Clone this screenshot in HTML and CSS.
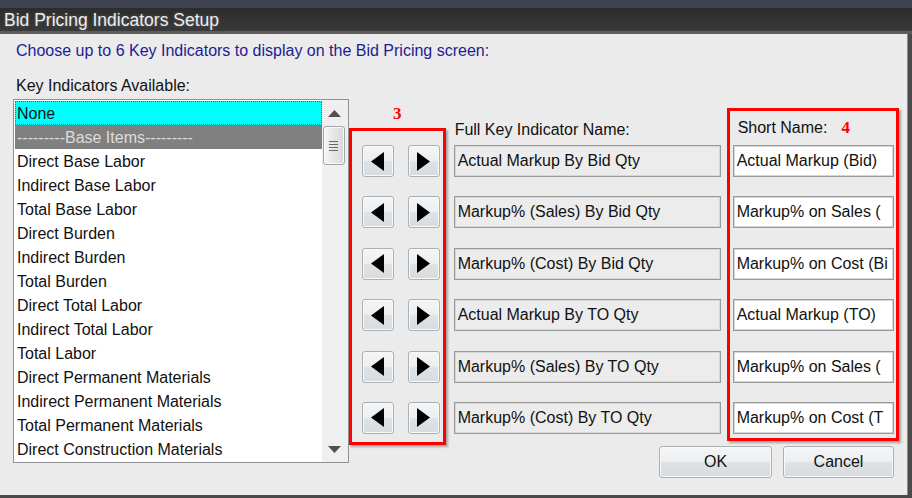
FILE: index.html
```html
<!DOCTYPE html>
<html>
<head>
<meta charset="utf-8">
<title>Bid Pricing Indicators Setup</title>
<link rel="stylesheet" href="styles.css">
</head>
<body>
<div class="window">
  <div class="titlebar"><span class="title">Bid Pricing Indicators Setup</span></div>
  <div class="content">
    <div class="heading">Choose up to 6 Key Indicators to display on the Bid Pricing screen:</div>
    <div class="label">Key Indicators Available:</div>
    <div class="main">
      <div class="listbox">
        <ul class="items">
          <li class="sel">None</li>
          <li class="group">---------Base Items---------</li>
          <li>Direct Base Labor</li>
          <li>Indirect Base Labor</li>
          <li>Total Base Labor</li>
          <li>Direct Burden</li>
          <li>Indirect Burden</li>
          <li>Total Burden</li>
          <li>Direct Total Labor</li>
          <li>Indirect Total Labor</li>
          <li>Total Labor</li>
          <li>Direct Permanent Materials</li>
          <li>Indirect Permanent Materials</li>
          <li>Total Permanent Materials</li>
          <li>Direct Construction Materials</li>
        </ul>
        <div class="scrollbar">
          <div class="sb-btn"><svg width="13" height="7" viewBox="0 0 13 7"><path d="M6.5 0 L13 7 L0 7 Z" fill="#505050"/></svg></div>
          <div class="thumb"><span class="grip"></span><span class="grip"></span><span class="grip"></span><span class="grip"></span></div>
          <div class="track"></div>
          <div class="sb-btn"><svg width="13" height="7" viewBox="0 0 13 7"><path d="M0 0 L13 0 L6.5 7 Z" fill="#505050"/></svg></div>
        </div>
      </div>
      <div class="right">
        <div class="top">
          <div class="col3">
            <div class="anno">3</div>
            <div class="redbox box3">
              <div class="btnrow"><button class="arrow"><svg width="13" height="19" viewBox="0 0 13 19"><path d="M13 0 L13 19 L0 9.5 Z" fill="#000"/></svg></button><button class="arrow"><svg width="13" height="19" viewBox="0 0 13 19"><path d="M0 0 L13 9.5 L0 19 Z" fill="#000"/></svg></button></div>
              <div class="btnrow"><button class="arrow"><svg width="13" height="19" viewBox="0 0 13 19"><path d="M13 0 L13 19 L0 9.5 Z" fill="#000"/></svg></button><button class="arrow"><svg width="13" height="19" viewBox="0 0 13 19"><path d="M0 0 L13 9.5 L0 19 Z" fill="#000"/></svg></button></div>
              <div class="btnrow"><button class="arrow"><svg width="13" height="19" viewBox="0 0 13 19"><path d="M13 0 L13 19 L0 9.5 Z" fill="#000"/></svg></button><button class="arrow"><svg width="13" height="19" viewBox="0 0 13 19"><path d="M0 0 L13 9.5 L0 19 Z" fill="#000"/></svg></button></div>
              <div class="btnrow"><button class="arrow"><svg width="13" height="19" viewBox="0 0 13 19"><path d="M13 0 L13 19 L0 9.5 Z" fill="#000"/></svg></button><button class="arrow"><svg width="13" height="19" viewBox="0 0 13 19"><path d="M0 0 L13 9.5 L0 19 Z" fill="#000"/></svg></button></div>
              <div class="btnrow"><button class="arrow"><svg width="13" height="19" viewBox="0 0 13 19"><path d="M13 0 L13 19 L0 9.5 Z" fill="#000"/></svg></button><button class="arrow"><svg width="13" height="19" viewBox="0 0 13 19"><path d="M0 0 L13 9.5 L0 19 Z" fill="#000"/></svg></button></div>
              <div class="btnrow"><button class="arrow"><svg width="13" height="19" viewBox="0 0 13 19"><path d="M13 0 L13 19 L0 9.5 Z" fill="#000"/></svg></button><button class="arrow"><svg width="13" height="19" viewBox="0 0 13 19"><path d="M0 0 L13 9.5 L0 19 Z" fill="#000"/></svg></button></div>
            </div>
          </div>
          <div class="fullcol">
            <div class="collabel">Full Key Indicator Name:</div>
            <div class="fields">
              <div class="field full">Actual Markup By Bid Qty</div>
              <div class="field full">Markup% (Sales) By Bid Qty</div>
              <div class="field full">Markup% (Cost) By Bid Qty</div>
              <div class="field full">Actual Markup By TO Qty</div>
              <div class="field full">Markup% (Sales) By TO Qty</div>
              <div class="field full">Markup% (Cost) By TO Qty</div>
            </div>
          </div>
          <div class="redbox box4">
            <div class="shortlabel">Short Name:<span class="anno4">4</span></div>
            <div class="fields">
              <div class="field short">Actual Markup (Bid)</div>
              <div class="field short">Markup% on Sales (</div>
              <div class="field short">Markup% on Cost (Bi</div>
              <div class="field short">Actual Markup (TO)</div>
              <div class="field short">Markup% on Sales (</div>
              <div class="field short">Markup% on Cost (T</div>
            </div>
          </div>
        </div>
        <div class="actions">
          <button class="cmd ok">OK</button>
          <button class="cmd cancel">Cancel</button>
        </div>
      </div>
    </div>
  </div>
</div>
</body>
</html>
```

FILE: styles.css
```css
* { box-sizing: border-box; }
html, body { margin: 0; padding: 0; }
body {
  width: 912px;
  height: 498px;
  overflow: hidden;
  font-family: "Liberation Sans", Arial, sans-serif;
  font-size: 16px;
  background: #4c4c4c;
}
.window {
  width: 912px;
  height: 498px;
  background: #4a4a4a;
  display: flex;
  flex-direction: column;
}
.titlebar {
  height: 34px;
  flex: none;
  background: linear-gradient(to bottom,
    #3e4250 0, #3e4250 8px,
    #2c2c2c 8px, #363636 28px,
    #3b3b3b 31px, #5c5c5c 31px, #5c5c5c 34px);
  padding: 9px 0 0 4px;
}
.title {
  display: block;
  color: #ececec;
  font-size: 17.5px;
  line-height: 22px;
  text-shadow: 0 0 3px rgba(255,255,255,0.25);
}
.content {
  width: 908px;
  height: 461px;
  flex: none;
  background: #ebebeb;
  border-right: 1px solid #8e8e8e;
  padding-left: 13px;
}
.heading {
  margin-left: 3px;
  padding-top: 7px;
  line-height: 20px;
  color: #1c1c94;
}
.label {
  margin-left: 3px;
  margin-top: 15px;
  line-height: 20px;
  color: #111;
}
.main {
  margin-top: 3px;
  display: flex;
  align-items: flex-start;
}
.listbox {
  width: 336px;
  height: 364px;
  border: 1px solid #8f9194;
  background: #fff;
  display: flex;
}
.items {
  list-style: none;
  margin: 0;
  padding: 1px 0 0 0;
  flex: 1;
  overflow: hidden;
}
.items li {
  height: 24px;
  line-height: 25px;
  padding-left: 3px;
  color: #111;
  white-space: nowrap;
}
.items li.sel {
  margin-left: 1px;
  padding-left: 2px;
  background: #00ffff;
  outline: 1px dotted #e03030;
  outline-offset: -1px;
}
.items li.group {
  margin-left: 1px;
  padding-left: 2px;
  background: #808080;
  color: #dcdcdc;
}
.scrollbar {
  width: 26px;
  flex: none;
  background: #efefef;
  display: flex;
  flex-direction: column;
  align-items: center;
}
.sb-btn {
  height: 26px;
  width: 26px;
  display: flex;
  align-items: center;
  justify-content: center;
  flex: none;
}
.thumb {
  width: 22px;
  height: 39px;
  margin-right: 2px;
  border: 1px solid #a4a4a4;
  border-radius: 3px;
  background: linear-gradient(to right, #f6f6f6, #e6e6e6 50%, #d8d8d8);
  box-shadow: inset 0 0 0 1px #fafafa;
  display: flex;
  flex-direction: column;
  align-items: center;
  justify-content: center;
  gap: 2px;
  flex: none;
}
.grip {
  width: 9px;
  height: 1px;
  background: #6a6a6a;
}
.track { flex: 1; }
.right {
  width: 559px;
  display: flex;
  flex-direction: column;
}
.top {
  display: flex;
  align-items: flex-start;
}
.col3 {
  width: 97px;
  flex: none;
}
.anno {
  height: 29px;
  line-height: 29px;
  text-align: center;
  color: #ff0000;
  font-family: "Liberation Serif", "Times New Roman", serif;
  font-weight: bold;
  font-size: 17px;
}
.redbox {
  border: 3px solid #ff0000;
  box-shadow: 2px 2px 2px rgba(0,0,0,0.3);
}
.box3 {
  height: 317px;
  padding: 14px 0 0 10px;
  display: flex;
  flex-direction: column;
  gap: 19.4px;
}
.btnrow {
  display: flex;
  gap: 14px;
}
.arrow {
  width: 32px;
  height: 32px;
  padding: 0;
  border: 1px solid #a9b0b6;
  border-radius: 3px;
  background: linear-gradient(to bottom, #f4f5f6 0%, #eceef0 48%, #dfe2e5 52%, #d8dcdf 100%);
  box-shadow: inset 0 0 0 1px #f8f9fa;
  display: flex;
  align-items: center;
  justify-content: center;
}
.fullcol {
  width: 267px;
  margin-left: 8px;
  flex: none;
}
.collabel {
  height: 46px;
  padding: 21px 0 0 1px;
  line-height: 20px;
  color: #111;
}
.fields {
  display: flex;
  flex-direction: column;
  gap: 19.4px;
}
.field {
  height: 32px;
  line-height: 30px;
  border: 1px solid #9a9a9a;
  box-shadow: inset 0 0 0 1px #d6d6d6;
  color: #111;
  white-space: nowrap;
  overflow: hidden;
}
.field.full {
  background: #ececec;
  padding-left: 3px;
}
.box4 {
  width: 172px;
  height: 333px;
  margin-left: 6px;
  margin-top: 9px;
}
.shortlabel {
  height: 34px;
  padding: 7px 0 0 8px;
  line-height: 20px;
  color: #111;
}
.anno4 {
  margin-left: 14px;
  color: #ff0000;
  font-family: "Liberation Serif", "Times New Roman", serif;
  font-weight: bold;
  font-size: 17px;
}
.box4 .fields {
  margin-left: 3px;
  width: 161px;
}
.field.short {
  background: #ffffff;
  padding-left: 3px;
}
.actions {
  margin-top: 1px;
  display: flex;
  justify-content: flex-end;
  gap: 11px;
  padding-right: 13px;
}
.cmd {
  height: 32px;
  border: 1px solid #a9b0b6;
  border-radius: 3px;
  background: linear-gradient(to bottom, #f4f5f6 0%, #eceef0 48%, #dfe2e5 52%, #d8dcdf 100%);
  box-shadow: inset 0 0 0 1px #f8f9fa;
  font-family: "Liberation Sans", Arial, sans-serif;
  font-size: 16px;
  color: #111;
  padding: 0;
}
.ok { width: 113px; }
.cancel { width: 111px; }
```
